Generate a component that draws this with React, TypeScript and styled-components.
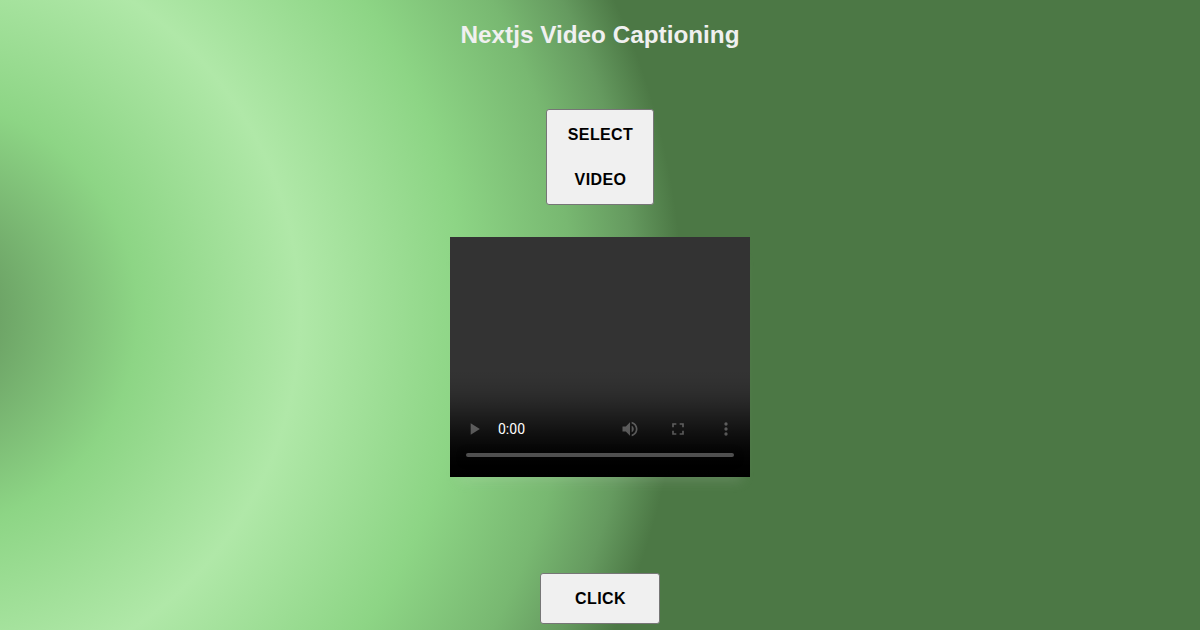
import React from 'react';
import styled, { createGlobalStyle } from 'styled-components';

const GlobalStyle = createGlobalStyle`
  html, body {
    margin: 0;
    padding: 0;
    height: 630px;
    overflow: hidden;
  }
`;

const Page = styled.main`
  height: 630px;
  display: flex;
  flex-direction: column;
  align-items: center;
  font-family: 'Liberation Sans', Arial, sans-serif;
  background: radial-gradient(
    circle 800px at -77px 315px,
    #5f9458 0,
    #6ea567 77px,
    #8dd585 215px,
    #b0e8a8 377px,
    #8dd585 540px,
    #78b871 650px,
    #659a5f 712px,
    #4c7845 760px
  );
`;

const Title = styled.h1`
  margin: 21px 0 0;
  font-size: 24.3px;
  line-height: 28px;
  font-weight: 700;
  color: #f0f0f0;
`;

const ActionButton = styled.button<{ $width: number; $lineHeight: number; $padY: number }>`
  display: block;
  box-sizing: border-box;
  width: ${props => props.$width}px;
  padding: ${props => props.$padY}px 0 ${props => props.$padY}px 1px;
  background: #f0f0f0;
  border: 1px solid #767676;
  border-radius: 3px;
  color: #000;
  font-family: inherit;
  font-size: 16px;
  font-weight: 700;
  letter-spacing: 0.4px;
  line-height: ${props => props.$lineHeight}px;
  text-align: center;
  cursor: pointer;
`;

const SelectSlot = styled.div`
  margin-top: 60px;
`;

const Player = styled.video`
  display: block;
  width: 300px;
  height: 240px;
  margin-top: 32px;
  box-shadow: 0 12px 12px -8px rgba(210, 210, 210, 0.16);
`;

const ClickSlot = styled.div`
  margin-top: 96px;
`;

const App: React.FC = () => {
  return (
    <Page>
      <GlobalStyle />
      <Title>Nextjs Video Captioning</Title>
      <SelectSlot>
        <ActionButton $width={108} $lineHeight={45} $padY={2}>SELECT VIDEO</ActionButton>
      </SelectSlot>
      <Player controls />
      <ClickSlot>
        <ActionButton $width={120} $lineHeight={47} $padY={1}>CLICK</ActionButton>
      </ClickSlot>
    </Page>
  );
};

export default App;
